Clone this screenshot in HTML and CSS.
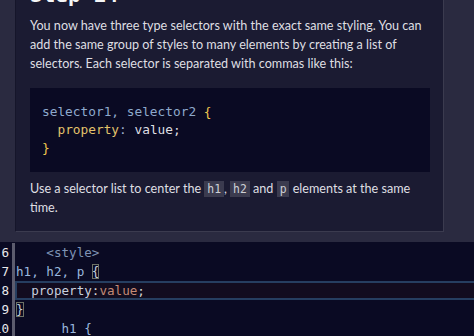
FILE: index.html
```html
<!DOCTYPE html>
<html lang="en">
<head>
    <meta charset="UTF-8">
    <meta name="viewport" content="width=device-width, initial-scale=1.0">
    <title>Step 14</title>
    <link rel="stylesheet" href="styles.css">
</head>
<body>
    <div class="instructions">
        <h1 class="step-title">Step 14</h1>
        <p class="intro">You now have three type selectors with the exact same styling. You can add the same group of styles to many elements by creating a list of selectors. Each selector is separated with commas like this:</p>

        <pre class="code-sample"><span class="sel">selector1, selector2</span> <span class="brace">{</span>
  <span class="prop">property</span><span class="punc">:</span> value;
<span class="brace">}</span></pre>

        <p>Use a selector list to center the <code>h1</code>, <code>h2</code> and <code>p</code> elements at the same time.</p>
    </div>

    <div class="editor">
        <div class="line">
            <span class="num">6</span>
            <span class="text">    <span class="tag">&lt;style&gt;</span></span>
        </div>
        <div class="line">
            <span class="num">7</span>
            <span class="text"><span class="sel">h1, h2, p</span> <span class="match">{</span></span>
        </div>
        <div class="line current">
            <span class="num">8</span>
            <span class="text">  <span class="prop">property</span>:<span class="val">value</span>;</span>
        </div>
        <div class="line">
            <span class="num">9</span>
            <span class="text"><span class="match">}</span></span>
        </div>
        <div class="line">
            <span class="num">10</span>
            <span class="text">      <span class="sel">h1 {</span></span>
        </div>
    </div>
</body>
</html>
```

FILE: styles.css
```css
* {
    margin: 0;
    padding: 0;
    box-sizing: border-box;
}

body {
    background: #2a2a40;
    font-family: Lato, 'Noto Sans', sans-serif;
    height: 336px;
    overflow: hidden;
}

.instructions {
    margin: 0 30px 0 15px;
    height: 232px;
    padding: 0 13px 0 14px;
    background: #1b1b32;
    border-left: 1px solid #15152a;
    border-right: 1px solid #3b3b4f;
    border-bottom: 1px solid #3b3b4f;
    overflow: hidden;
    color: #dfdfe2;
}

.step-title {
    margin-top: -16px;
    font-family: 'DejaVu Sans Mono', monospace;
    font-size: 21px;
    line-height: 22px;
    color: #f5f6f7;
}

.instructions p {
    font-size: 12.6px;
    line-height: 19px;
}

.instructions .intro {
    margin-top: 10px;
}

.code-sample {
    margin: 15px 0 7px;
    padding: 15px 12px 15px;
    background: #0a0a23;
    font-family: 'DejaVu Sans Mono', monospace;
    font-size: 12.8px;
    line-height: 18px;
    color: #dfdfe2;
}

.code-sample .sel {
    color: #8ea9cc;
}

.code-sample .brace {
    color: #f1c84f;
}

.code-sample .prop {
    color: #e2c36b;
}

.code-sample .punc {
    color: #9cb0cf;
}

code {
    display: inline-block;
    font-family: 'DejaVu Sans Mono', monospace;
    font-size: 11.4px;
    line-height: 16px;
    background: #3b3b4f;
    color: #cfd0d6;
    padding: 0 3px;
}

.editor {
    margin-top: 10px;
    height: 94px;
    background: #0a0a23;
    padding-top: 1px;
    font-family: 'DejaVu Sans Mono', monospace;
    font-size: 12.6px;
    color: #d4d4d4;
}

.line {
    display: flex;
    height: 19px;
    line-height: 19px;
}

.num {
    width: 9px;
    flex-shrink: 0;
    overflow: hidden;
    direction: rtl;
    text-align: right;
    color: #e8e8ec;
    margin-right: 3px;
}

.text {
    flex: 1;
    white-space: pre;
    border-left: 3px solid #5c5c6e;
    padding-left: 1px;
}

.line.current .text {
    background: #120c1f;
    box-shadow: inset 0 2px 0 #263e60, inset 0 -2px 0 #263e60, inset 2px 0 0 #263e60;
}

.tag {
    color: #7f93b4;
}

.editor .sel {
    color: #9ab8df;
}

.editor .prop {
    color: #c7cfde;
}

.val {
    color: #c48a76;
}

.match {
    outline: 1px solid #6d7266;
    outline-offset: -1px;
    color: #c7cfde;
}
```
